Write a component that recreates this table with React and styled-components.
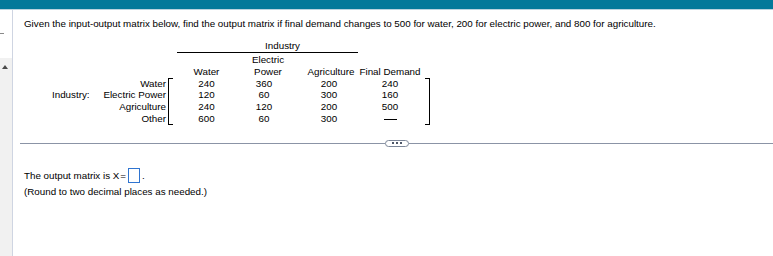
import styled, { createGlobalStyle } from "styled-components";

const GlobalStyle = createGlobalStyle`
  html, body {
    margin: 0;
    padding: 0;
    background: #ffffff;
  }
  body {
    font-family: "Liberation Sans", Arial, sans-serif;
    color: #000;
  }
`;

const Page = styled.div`
  width: 773px;
  height: 256px;
  display: flex;
  flex-direction: column;
  overflow: hidden;
`;

const TopBar = styled.div`
  height: 9px;
  background: #02799a;
  border-bottom: 1px solid #b9d3df;
`;

const Body = styled.div`
  flex: 1;
  display: flex;
`;

const Sidebar = styled.div`
  width: 12px;
  border-right: 1px solid #cfd5e2;
  display: flex;
  flex-direction: column;
`;

const SideTop = styled.div`
  height: 48px;
  background: #fff;
  padding-top: 23px;
  box-sizing: border-box;
`;

const Dash = styled.div`
  width: 4px;
  height: 1px;
  background: #8a8a8a;
`;

const SideRest = styled.div`
  flex: 1;
  background: #f1f1f1;
  padding: 7px 0 0 2px;
`;

const UpArrow = styled.div`
  width: 0;
  height: 0;
  border-left: 3px solid transparent;
  border-right: 3px solid transparent;
  border-bottom: 4px solid #4a4a4a;
`;

const Main = styled.div`
  flex: 1;
  display: flex;
  flex-direction: column;
  font-size: 9.8px;
`;

const Question = styled.p`
  margin: 0;
  padding: 8px 0 0 11px;
  line-height: 12px;
`;

const Matrix = styled.div`
  margin: 11px 0 0 39px;
  display: grid;
  grid-template-columns: 48px 67px 10px 59px 64px 58px 64px 8px;
  grid-template-rows: 14px repeat(6, 11.75px);
  line-height: 11.75px;
  margin-top: 10px;
`;

const Title = styled.div`
  grid-column: 4 / 7;
  grid-row: 1;
  height: 13px;
  line-height: 12px;
  border-bottom: 1px solid #000;
  display: flex;
  justify-content: center;
  padding-left: 30px;
  box-sizing: border-box;
`;

const Head = styled.div`
  grid-column: ${(p) => p.$col};
  grid-row: ${(p) => p.$row};
  text-align: center;
  white-space: nowrap;
  padding-left: ${(p) => p.$shift || 0}px;
`;

const RowLabel = styled.div`
  grid-column: 2;
  grid-row: ${(p) => p.$row};
  text-align: right;
  white-space: nowrap;
  padding-right: 1px;
`;

const SideLabel = styled.div`
  grid-column: 1;
  grid-row: 5;
`;

const Cell = styled.div`
  grid-column: ${(p) => p.$col};
  grid-row: ${(p) => p.$row};
  text-align: center;
  padding-right: ${(p) => p.$shift || 0}px;
`;

const Bracket = styled.div`
  grid-row: 4 / 8;
  width: 4px;
  border: 1.5px solid #000;
  ${(p) =>
    p.$right
      ? "grid-column: 8; border-left: none; justify-self: end;"
      : "grid-column: 3; border-right: none; margin-left: 1px;"}
`;

const Dash2 = styled.span`
  display: inline-block;
  width: 13px;
  height: 1px;
  background: #000;
  vertical-align: middle;
`;

const Divider = styled.div`
  margin: 15px 0 0 7px;
  display: flex;
  align-items: center;
`;

const Rule = styled.div`
  flex: 1;
  height: 1px;
  background: #8b94a6;
`;

const More = styled.div`
  width: 22px;
  height: 5px;
  border: 1px solid #7d8799;
  border-radius: 4px;
  background: #fff;
  display: flex;
  align-items: center;
  justify-content: center;
  gap: 2px;
`;

const Dot = styled.span`
  width: 2px;
  height: 2px;
  background: #4e5768;
`;

const Answer = styled.div`
  margin: 21px 0 0 11px;
  line-height: 16px;
  display: flex;
  align-items: center;
`;

const Equals = styled.span`
  margin: 0 0 0 1px;
`;

const Box = styled.span`
  display: inline-block;
  width: 10px;
  height: 13px;
  border: 1.5px solid #2f74d0;
  margin: 0 2px 0 2px;
`;

const Note = styled.div`
  margin: 2px 0 0 11px;
  line-height: 12px;
`;

const rows = [
  ["Water", "240", "360", "200", "240"],
  ["Electric Power", "120", "60", "300", "160"],
  ["Agriculture", "240", "120", "200", "500"],
  ["Other", "600", "60", "300", null],
];

export default function App() {
  return (
    <Page>
      <GlobalStyle />
      <TopBar />
      <Body>
        <Sidebar>
          <SideTop>
            <Dash />
          </SideTop>
          <SideRest>
            <UpArrow />
          </SideRest>
        </Sidebar>
        <Main>
          <Question>
            Given the input-output matrix below, find the output matrix if final demand changes to 500 for water, 200 for
            electric power, and 800 for agriculture.
          </Question>
          <Matrix>
            <Title>Industry</Title>
            <Head $col={5} $row={2}>Electric</Head>
            <Head $col={4} $row={3}>Water</Head>
            <Head $col={5} $row={3}>Power</Head>
            <Head $col={6} $row={3} $shift={4}>Agriculture</Head>
            <Head $col={7} $row={3}>Final Demand</Head>
            <SideLabel>Industry:</SideLabel>
            <Bracket />
            <Bracket $right />
            {rows.map(([label, ...vals], i) => (
              <>
                <RowLabel key={label} $row={i + 4}>{label}</RowLabel>
                {vals.map((v, j) => (
                  <Cell key={label + j} $col={j + 4} $row={i + 4} $shift={j === 1 ? 8 : 0}>
                    {v === null ? <Dash2 /> : v}
                  </Cell>
                ))}
              </>
            ))}
          </Matrix>
          <Divider>
            <Rule />
            <More>
              <Dot />
              <Dot />
              <Dot />
            </More>
            <Rule />
          </Divider>
          <Answer>
            The output matrix is X<Equals>=</Equals>
            <Box />.
          </Answer>
          <Note>(Round to two decimal places as needed.)</Note>
        </Main>
      </Body>
    </Page>
  );
}
